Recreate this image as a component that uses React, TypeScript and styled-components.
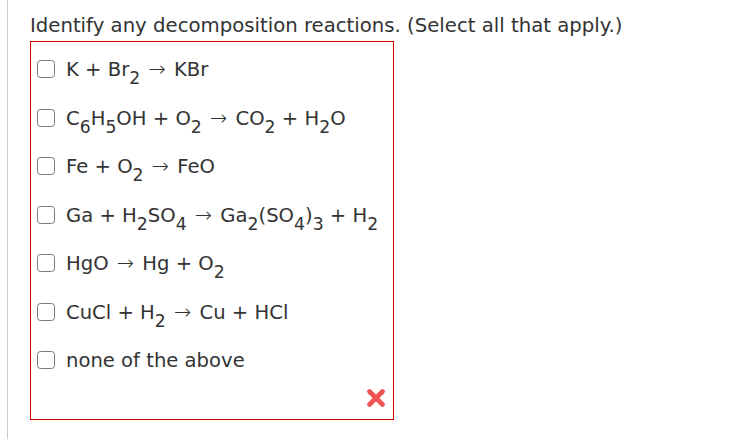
import React from 'react';
import styled, { createGlobalStyle } from 'styled-components';

const GlobalStyle = createGlobalStyle`
  html, body {
    margin: 0;
    padding: 0;
    background: #fff;
  }
  body {
    font-family: 'DejaVu Sans', Verdana, sans-serif;
    color: #333;
  }
`;

const Page = styled.div`
  padding-left: 7px;
  height: 439px;
  box-sizing: border-box;
`;

const Content = styled.div`
  border-left: 1px solid #cccccc;
  height: 100%;
  padding: 14px 0 0 22px;
  box-sizing: border-box;
`;

const Prompt = styled.div`
  font-size: 19.7px;
  line-height: 24px;
  margin-bottom: 3px;
  white-space: nowrap;
`;

const AnswerBox = styled.div`
  width: 362px;
  border: 1px solid #d40000;
  padding: 3px 0 8px 0;
  display: flex;
  flex-direction: column;
`;

const Option = styled.label`
  display: flex;
  align-items: center;
  height: 48.5px;
  padding-left: 6px;
  font-size: 19.6px;
  gap: 11px;
  cursor: pointer;
  white-space: nowrap;
`;

const Check = styled.input`
  appearance: none;
  margin: 0;
  width: 18px;
  height: 18px;
  border: 1.5px solid #7a7a7a;
  border-radius: 3.5px;
  background: #fff;
  box-sizing: border-box;
  flex-shrink: 0;
`;

const Sub = styled.sub`
  font-size: 0.88em;
  line-height: 0;
  vertical-align: -0.45em;
`;

const Arrow = styled.span`
  font-family: 'DejaVu Sans', sans-serif;
  font-weight: 200;
  font-size: 1.05em;
  margin: 0 2px;
`;

const Footer = styled.div`
  display: flex;
  justify-content: flex-end;
  padding-right: 7px;
  height: 26px;
  align-items: center;
`;

const WrongMark = () => (
  <svg width="20" height="20" viewBox="0 0 20 20">
    <g stroke="#f04646" strokeWidth="4.6" strokeLinecap="round" opacity="0.92">
      <line x1="3.5" y1="3.5" x2="16.5" y2="16.5" />
      <line x1="16.5" y1="3.5" x2="3.5" y2="16.5" />
    </g>
  </svg>
);

const options: React.ReactNode[] = [
  <>K + Br<Sub>2</Sub> <Arrow>→</Arrow> KBr</>,
  <>
    C<Sub>6</Sub>H<Sub>5</Sub>OH + O<Sub>2</Sub> <Arrow>→</Arrow> CO<Sub>2</Sub> + H<Sub>2</Sub>O
  </>,
  <>Fe + O<Sub>2</Sub> <Arrow>→</Arrow> FeO</>,
  <>
    Ga + H<Sub>2</Sub>SO<Sub>4</Sub> <Arrow>→</Arrow> Ga<Sub>2</Sub>(SO<Sub>4</Sub>)<Sub>3</Sub> + H
    <Sub>2</Sub>
  </>,
  <>HgO <Arrow>→</Arrow> Hg + O<Sub>2</Sub></>,
  <>CuCl + H<Sub>2</Sub> <Arrow>→</Arrow> Cu + HCl</>,
  <>none of the above</>,
];

const App: React.FC = () => {
  return (
    <Page>
      <GlobalStyle />
      <Content>
        <Prompt>Identify any decomposition reactions. (Select all that apply.)</Prompt>
        <AnswerBox>
          {options.map((opt, i) => (
            <Option key={i}>
              <Check type="checkbox" />
              <span>{opt}</span>
            </Option>
          ))}
          <Footer>
            <WrongMark />
          </Footer>
        </AnswerBox>
      </Content>
    </Page>
  );
};

export default App;
